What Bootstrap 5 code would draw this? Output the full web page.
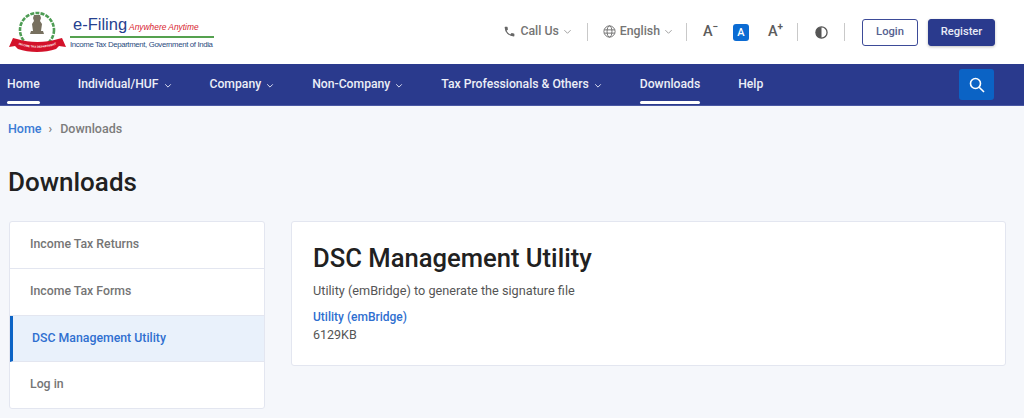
<!DOCTYPE html>
<html lang="en">
<head>
  <meta charset="UTF-8">
  <title>Downloads</title>
  <meta name="viewport" content="width=device-width, initial-scale=1">
  <link href="https://cdn.jsdelivr.net/npm/bootstrap@5.3.0/dist/css/bootstrap.min.css" rel="stylesheet">
  <style>
    body {
      font-family: Roboto, "Liberation Sans", sans-serif;
      background-color: #f5f7fb;
      color: #212121;
      overflow: hidden;
    }
    .top-head {
      height: 64px;
      background: #fff;
      padding: 0 29px 0 9px;
    }
    .logo-text { margin-left: 4px; margin-top: 1px; width: 144px; }
    .logo-main { font-family: "Liberation Sans", sans-serif; font-size: 16.5px; line-height: 18px; color: #26418f; padding-left: 3px; white-space: nowrap; }
    .logo-tag { font-size: 8.4px; font-style: italic; color: #d8232f; margin-left: 2px; }
    .logo-sub { font-family: "Liberation Sans", sans-serif; font-size: 7.8px; letter-spacing: -.36px; line-height: 11px; color: #2b4a80; border-top: 2px solid #55a14f; padding-top: 1px; white-space: nowrap; }
    .ribbon-text { font-family: "Liberation Sans", sans-serif; font-size: 2.9px; font-weight: 700; fill: #fff; }
    .tool-link { font-size: 12.3px; font-weight: 500; color: #757575; text-decoration: none; display: flex; align-items: center; margin-top: -1px; }
    .tool-link svg:first-child { margin-right: 4px; }
    .tool-link svg:last-child { margin-left: 4px; }
    .tool-sep { width: 1px; height: 18px; background: #c9c9c9; }
    .sep-a { margin: 0 15px; }
    .sep-b { margin: 0 16px 0 13px; }
    .sep-c { margin: 0 17px 0 15px; }
    .sep-d { margin: 0 17px 0 16px; }
    .size-a { width: 16px; height: 17px; border-radius: 3px; background: #0b6bd3; color: #fff; font-size: 11px; font-weight: 500; line-height: 17px; text-align: center; margin: 0 19px 0 16px; }
    .size-plain { font-size: 14.5px; font-weight: 500; color: #5c5c5c; line-height: 16px; width: 14px; position: relative; }
    .size-mark { position: absolute; top: -3px; right: -1px; font-size: 10px; line-height: 12px; font-weight: 700; }
    .btn-login, .btn-register { font-weight: 500; height: 27px; padding: 0; border-radius: 3px; display: flex; align-items: center; justify-content: center; }
    .btn-login { width: 56px; font-size: 11.2px; background: #fff; color: #55608f; border: 1px solid #3d4b98; margin-right: 10px; }
    .btn-register { width: 67px; font-size: 11.2px; background: #2a3a8d; color: #e8eaf6; border: 1px solid #2a3a8d; box-shadow: 0 1px 3px rgba(0,0,0,.25); }
    .main-nav {
      height: 42px;
      background: #2a3a8d;
      border-bottom: 1px solid #4a58a3;
      padding: 0 30px 0 7px;
    }
    .nav-row { gap: 38px; }
    .nav-item-x {
      font-size: 12.2px;
      font-weight: 500;
      color: #eceef7;
      text-decoration: none;
      height: 40px;
      display: flex;
      align-items: center;
      position: relative;
      white-space: nowrap;
    }
    .nav-item-x.on::after {
      content: "";
      position: absolute;
      left: 0; right: 0; bottom: 0;
      height: 3px;
      border-radius: 2px;
      background: #fff;
    }
    .nav-item-x svg { margin-left: 5px; margin-top: 2px; }
    .search-btn { width: 35px; height: 31px; background: #0b63c5; border-radius: 3px; display: flex; align-items: center; justify-content: center; }
    .crumbs { padding: 15px 8px 0; font-size: 12.5px; font-weight: 500; line-height: 16px; color: #7c7c7c; }
    .crumbs a { color: #3a7bd5; text-decoration: none; }
    .crumbs .sep { margin: 0 8px 0 7px; font-size: 12px; }
    .page-title { font-size: 26px; font-weight: 500; line-height: 32px; margin: 29px 0 23px 8px; color: #212121; }
    .page-cols { padding: 0 18px 0 9px; gap: 26px; }
    .side-list { width: 256px; border: 1px solid #e3e6f0; border-radius: 3px; background: #fff; overflow: hidden; flex: none; }
    .side-item { display: block; height: 46.75px; line-height: 45px; padding-left: 20px; font-size: 12.3px; font-weight: 500; color: #757575; text-decoration: none; border-bottom: 1px solid #e3e6f0; }
    .side-item:last-child { border-bottom: 0; height: 45.75px; }
    .side-item.on { background: #e9f1fb; color: #2f6fd0; border-left: 3px solid #0b63c5; padding-left: 19px; }
    .doc-card { flex: 1; height: 145px; background: #fff; border: 1px solid #e3e6f0; border-radius: 3px; padding: 20px 21px; }
    .doc-card h2 { font-size: 25.6px; font-weight: 500; line-height: 32px; margin: 0 0 9px; color: #212121; }
    .doc-card p { font-size: 12.7px; line-height: 16px; color: #555; margin: 0 0 10px; }
    .doc-card a { display: block; font-size: 12px; font-weight: 500; line-height: 16px; color: #2f6fd0; text-decoration: none; margin-bottom: 2px; }
    .doc-size { font-size: 12.5px; line-height: 16px; color: #555; }
  </style>
</head>
<body>
  <header class="top-head d-flex align-items-center justify-content-between">
    <div class="d-flex align-items-center">
      <svg width="57" height="44" viewBox="0 0 57 44">
        <circle cx="28" cy="20" r="17" fill="none" stroke="#4f9d55" stroke-width="2.6" stroke-dasharray="4 1.2"/>
        <path d="M25 5h6l1 3-1 3 2 3-1 7h2l1 3H21l1-3h2l-1-7 2-3-1-3z" fill="#77705f"/>
        <path d="M0 37l4-9 4 1c12 4 29 4 41 0l4-1 4 9-7-1-3 3c-11 4-27 4-38 0l-3-3z" fill="#d3122a"/>
        <path id="ribbon-arc" d="M8 34c13 5 28 5 41 0" fill="none"/>
        <text class="ribbon-text"><textPath href="#ribbon-arc" startOffset="50%" text-anchor="middle">INCOME TAX DEPARTMENT</textPath></text>
      </svg>
      <div class="logo-text">
        <div class="logo-main">e-Filing<span class="logo-tag">Anywhere Anytime</span></div>
        <div class="logo-sub">Income Tax Department, Government of India</div>
      </div>
    </div>
    <div class="d-flex align-items-center">
      <a class="tool-link" href="#">
        <svg width="13" height="13" viewBox="0 0 24 24" fill="#666"><path d="M6.6 10.8a15 15 0 0 0 6.6 6.6l2.2-2.2a1 1 0 0 1 1-.25 11 11 0 0 0 3.6.57 1 1 0 0 1 1 1V20a1 1 0 0 1-1 1A17 17 0 0 1 3 4a1 1 0 0 1 1-1h3.5a1 1 0 0 1 1 1c0 1.25.2 2.45.57 3.57a1 1 0 0 1-.25 1z"/></svg>
        Call Us
        <svg width="9" height="9" viewBox="0 0 10 10" fill="none" stroke="#999" stroke-width="1"><path d="M1.5 3.5L5 7l3.5-3.5"/></svg>
      </a>
      <div class="tool-sep sep-a"></div>
      <a class="tool-link" href="#">
        <svg width="13" height="13" viewBox="0 0 16 16" fill="none" stroke="#666" stroke-width="1.1"><circle cx="8" cy="8" r="6.9"/><ellipse cx="8" cy="8" rx="3" ry="6.9"/><path d="M1.6 6h12.8M1.6 10h12.8"/></svg>
        English
        <svg width="9" height="9" viewBox="0 0 10 10" fill="none" stroke="#999" stroke-width="1"><path d="M1.5 3.5L5 7l3.5-3.5"/></svg>
      </a>
      <div class="tool-sep sep-b"></div>
      <div class="size-plain">A<span class="size-mark">&minus;</span></div>
      <div class="size-a">A</div>
      <div class="size-plain">A<span class="size-mark">+</span></div>
      <div class="tool-sep sep-c"></div>
      <svg width="13" height="13" viewBox="0 0 14 14"><circle cx="7" cy="7" r="6" fill="#fff" stroke="#555" stroke-width="1.4"/><path d="M7 1a6 6 0 0 0 0 12z" fill="#555"/></svg>
      <div class="tool-sep sep-d"></div>
      <a class="btn btn-login" href="#">Login</a>
      <a class="btn btn-register" href="#">Register</a>
    </div>
  </header>

  <nav class="main-nav d-flex justify-content-between">
    <div class="d-flex nav-row">
      <a class="nav-item-x on" href="#">Home</a>
      <a class="nav-item-x" href="#">Individual/HUF<svg width="8" height="9" viewBox="0 0 10 10" fill="none" stroke="#dfe2f2" stroke-width="1.2"><path d="M1.5 3.5L5 7l3.5-3.5"/></svg></a>
      <a class="nav-item-x" href="#">Company<svg width="8" height="9" viewBox="0 0 10 10" fill="none" stroke="#dfe2f2" stroke-width="1.2"><path d="M1.5 3.5L5 7l3.5-3.5"/></svg></a>
      <a class="nav-item-x" href="#">Non-Company<svg width="8" height="9" viewBox="0 0 10 10" fill="none" stroke="#dfe2f2" stroke-width="1.2"><path d="M1.5 3.5L5 7l3.5-3.5"/></svg></a>
      <a class="nav-item-x" href="#">Tax Professionals &amp; Others<svg width="8" height="9" viewBox="0 0 10 10" fill="none" stroke="#dfe2f2" stroke-width="1.2"><path d="M1.5 3.5L5 7l3.5-3.5"/></svg></a>
      <a class="nav-item-x on" href="#">Downloads</a>
      <a class="nav-item-x" href="#">Help</a>
    </div>
    <div class="d-flex align-items-center">
      <a class="search-btn" href="#">
        <svg width="16" height="16" viewBox="0 0 16 16" fill="none" stroke="#fff" stroke-width="1.6"><circle cx="6.5" cy="6.5" r="5"/><path d="M10.2 10.2L15 15"/></svg>
      </a>
    </div>
  </nav>

  <div class="crumbs"><a href="#">Home</a><span class="sep">&rsaquo;</span>Downloads</div>
  <h1 class="page-title">Downloads</h1>

  <div class="page-cols d-flex align-items-start">
    <div class="side-list">
      <a class="side-item" href="#">Income Tax Returns</a>
      <a class="side-item" href="#">Income Tax Forms</a>
      <a class="side-item on" href="#">DSC Management Utility</a>
      <a class="side-item" href="#">Log in</a>
    </div>
    <div class="doc-card">
      <h2>DSC Management Utility</h2>
      <p>Utility (emBridge) to generate the signature file</p>
      <a href="#">Utility (emBridge)</a>
      <div class="doc-size">6129KB</div>
    </div>
  </div>
</body>
</html>
